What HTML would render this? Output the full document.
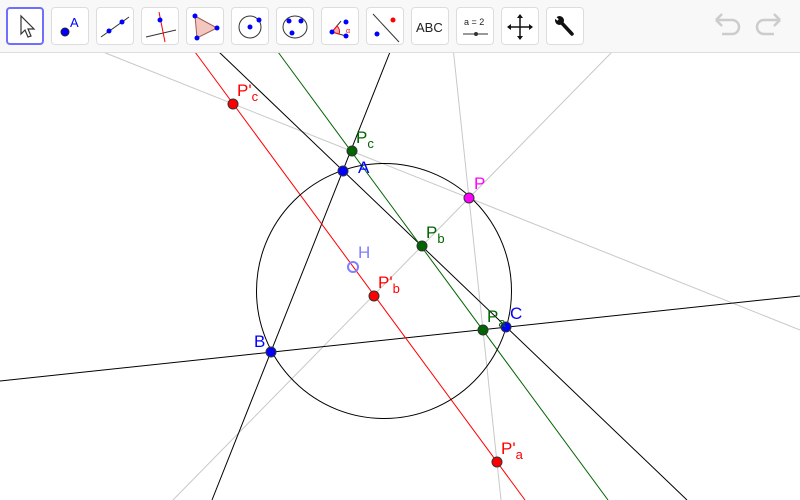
<!DOCTYPE html>
<html><head><meta charset="utf-8"><style>
html,body{margin:0;padding:0;width:800px;height:500px;overflow:hidden;background:#fff;font-family:"Liberation Sans",sans-serif}
#tb{position:absolute;left:0;top:0;width:800px;height:52px;background:#f8f8f8;border-bottom:1px solid #ddd}
.b{position:absolute;top:7px;width:38px;height:38px;background:#fff;border:1px solid #ddd;border-radius:4px;box-sizing:border-box}
.b svg{position:absolute;left:0;top:0}
</style></head><body>
<svg width="800" height="500" style="position:absolute;left:0;top:0" font-family="Liberation Sans, sans-serif">
<g stroke-width="1" fill="none">
<line x1="103" y1="52" x2="800" y2="330" stroke="#c8c8c8"/>
<line x1="612" y1="52" x2="173" y2="500" stroke="#c8c8c8"/>
<line x1="453.5" y1="52" x2="501" y2="500" stroke="#c8c8c8"/>
<line x1="390" y1="52" x2="212" y2="500" stroke="#000"/>
<line x1="0" y1="381" x2="800" y2="296" stroke="#000"/>
<line x1="219" y1="52" x2="687" y2="500" stroke="#000"/>
<line x1="278" y1="52" x2="608" y2="500" stroke="#006400"/>
<line x1="195" y1="52" x2="525" y2="500" stroke="#ff0000"/>
<circle cx="384" cy="291" r="127.5" stroke="#000"/>
<circle cx="353" cy="267" r="5" stroke="#8080ff" stroke-width="2"/>
</g>
<g stroke="#333" stroke-width="1">
<circle cx="233" cy="104" r="5" fill="#f00"/>
<circle cx="374" cy="296" r="5" fill="#f00"/>
<circle cx="497" cy="462" r="5" fill="#f00"/>
<circle cx="352" cy="151" r="5" fill="#006400"/>
<circle cx="422" cy="246" r="5" fill="#006400"/>
<circle cx="483" cy="330" r="5" fill="#006400"/>
<circle cx="343" cy="171" r="5" fill="#00f"/>
<circle cx="271" cy="352" r="5" fill="#00f"/>
<circle cx="506" cy="327" r="5" fill="#00f"/>
<circle cx="469" cy="198" r="5" fill="#f0f"/>
</g>
<g font-size="17">
<text x="237" y="96" fill="#f00">P'<tspan font-size="13" dy="5">c</tspan></text>
<text x="356" y="143" fill="#006400">P<tspan font-size="13" dy="5">c</tspan></text>
<text x="358" y="173" fill="#00f">A</text>
<text x="474" y="189" fill="#f0f">P</text>
<text x="426" y="238" fill="#006400">P<tspan font-size="13" dy="5">b</tspan></text>
<text x="358" y="258" fill="#8080ff">H</text>
<text x="378" y="288" fill="#f00">P'<tspan font-size="13" dy="5">b</tspan></text>
<text x="487" y="322" fill="#006400">P<tspan font-size="13" dy="5">a</tspan></text>
<text x="510" y="319" fill="#00f">C</text>
<text x="254" y="347" fill="#00f">B</text>
<text x="501" y="454" fill="#f00">P'<tspan font-size="13" dy="5">a</tspan></text>
</g>
</svg>
<div id="tb">
<div class="b" style="left:6px;border:2px solid #6e6eff"><svg width="34" height="34"><path d="M13 7 L13 25 L17 21 L20 28 L23 27 L20 20 L26 20 Z" fill="#fff" stroke="#333" stroke-width="1.2"/></svg></div>
<div class="b" style="left:51px"><svg width="36" height="36"><circle cx="13" cy="24" r="4" fill="#00f" stroke="#222"/><text x="18" y="19" fill="#00f" font-size="13" font-family="Liberation Sans">A</text></svg></div>
<div class="b" style="left:96px"><svg width="36" height="36"><line x1="4" y1="29" x2="32" y2="9" stroke="#333"/><circle cx="12" cy="23" r="2.5" fill="#00f"/><circle cx="25" cy="14" r="2.5" fill="#00f"/></svg></div>
<div class="b" style="left:141px"><svg width="36" height="36"><line x1="4" y1="29" x2="34" y2="22" stroke="#333"/><line x1="17" y1="4" x2="23" y2="34" stroke="#f00"/><circle cx="18" cy="12" r="2.5" fill="#00f"/></svg></div>
<div class="b" style="left:186px"><svg width="36" height="36"><path d="M8 8 L30 20 L10 30 Z" fill="#f4c6c0" stroke="#a05a50"/><circle cx="8" cy="8" r="2.5" fill="#00f"/><circle cx="30" cy="20" r="2.5" fill="#00f"/><circle cx="10" cy="30" r="2.5" fill="#00f"/></svg></div>
<div class="b" style="left:231px"><svg width="36" height="36"><circle cx="18" cy="19" r="11" fill="none" stroke="#333"/><circle cx="18" cy="19" r="2.5" fill="#00f"/><circle cx="27" cy="12" r="2.5" fill="#00f"/></svg></div>
<div class="b" style="left:276px"><svg width="36" height="36"><ellipse cx="18" cy="19" rx="12" ry="11" fill="none" stroke="#333"/><circle cx="12" cy="13" r="2.5" fill="#00f"/><circle cx="24" cy="13" r="2.5" fill="#00f"/><circle cx="15" cy="25" r="2.5" fill="#00f"/></svg></div>
<div class="b" style="left:321px"><svg width="36" height="36"><path d="M10 24 L19 13 M10 24 L24 28" stroke="#333"/><path d="M10 24 L15 18 A7 7 0 0 1 17 26 Z" fill="#f4b0b0" stroke="#f00"/><circle cx="10" cy="24" r="2.5" fill="#00f"/><circle cx="24" cy="28" r="2.5" fill="#00f"/><circle cx="24" cy="14" r="2.5" fill="#00f"/><text x="24" y="25" fill="#f00" font-size="7">α</text></svg></div>
<div class="b" style="left:366px"><svg width="36" height="36"><line x1="6" y1="6" x2="32" y2="34" stroke="#333"/><circle cx="10" cy="26" r="2.5" fill="#00f"/><circle cx="26" cy="12" r="2.5" fill="#f00"/></svg></div>
<div class="b" style="left:411px"><svg width="36" height="36"><text x="4" y="24" font-size="13" fill="#222" font-family="Liberation Sans">ABC</text></svg></div>
<div class="b" style="left:456px"><svg width="36" height="36"><text x="7" y="17" font-size="9" fill="#222" font-family="Liberation Sans">a = 2</text><line x1="6" y1="26" x2="31" y2="26" stroke="#333"/><circle cx="19" cy="26" r="2" fill="#333"/></svg></div>
<div class="b" style="left:501px"><svg width="36" height="36"><path d="M18 7 V31 M6 19 H30" stroke="#111" stroke-width="1.5"/><path d="M18 6 L15 10 H21Z M18 32 L15 28 H21Z M5 19 L9 16 V22Z M31 19 L27 16 V22Z" fill="#111"/></svg></div>
<div class="b" style="left:546px"><svg width="36" height="36"><path d="M12 12 L25 26" stroke="#111" stroke-width="3.5" stroke-linecap="round"/><circle cx="12.5" cy="12.5" r="4.5" fill="#111"/><path d="M8 9 L11 12" stroke="#fff" stroke-width="2"/></svg></div>
<svg width="80" height="40" style="position:absolute;left:710px;top:8px"><path d="M8 12 H22 A7 7 0 0 1 22 26 H12" fill="none" stroke="#ccc" stroke-width="2.5"/><path d="M6 12 L12 6 M6 12 L12 18" stroke="#ccc" stroke-width="2.5" fill="none"/><path d="M68 12 H54 A7 7 0 0 0 54 26 H64" fill="none" stroke="#ccc" stroke-width="2.5"/><path d="M70 12 L64 6 M70 12 L64 18" stroke="#ccc" stroke-width="2.5" fill="none"/></svg>
</div>
</body></html>
